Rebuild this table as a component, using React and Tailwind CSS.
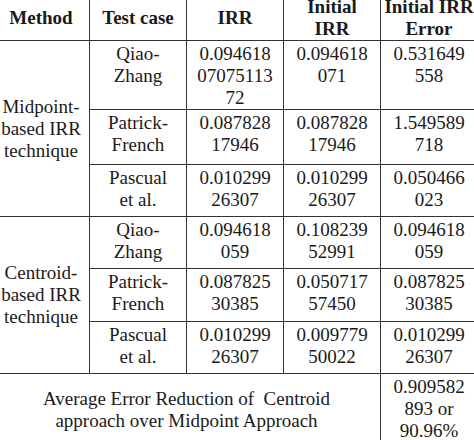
import React from "react";

const groups = [
  {
    method: ["Midpoint-", "based IRR", "technique"],
    rows: [
      { h: "h-[68px]", test: ["Qiao-", "Zhang"], irr: ["0.094618", "07075113", "72"], init: ["0.094618", "071"], err: ["0.531649", "558"] },
      { h: "h-[55px]", test: ["Patrick-", "French"], irr: ["0.087828", "17946"], init: ["0.087828", "17946"], err: ["1.549589", "718"] },
      { h: "h-[52px]", test: ["Pascual", "et al."], irr: ["0.010299", "26307"], init: ["0.010299", "26307"], err: ["0.050466", "023"] },
    ],
  },
  {
    method: ["Centroid-", "based IRR", "technique"],
    rows: [
      { h: "h-[52px]", test: ["Qiao-", "Zhang"], irr: ["0.094618", "059"], init: ["0.108239", "52991"], err: ["0.094618", "059"] },
      { h: "h-[53px]", test: ["Patrick-", "French"], irr: ["0.087825", "30385"], init: ["0.050717", "57450"], err: ["0.087825", "30385"] },
      { h: "h-[52px]", test: ["Pascual", "et al."], irr: ["0.010299", "26307"], init: ["0.009779", "50022"], err: ["0.010299", "26307"] },
    ],
  },
];

function Lines({ lines }) {
  return lines.map((l, i) => (
    <div key={i} className="whitespace-nowrap font-['Liberation_Serif',serif]">{l}</div>
  ));
}

const cell = "font-['Liberation_Serif',serif] border-[1.5px] border-[#333] text-center p-0 text-[19px] leading-[22px]";
const data = `${cell} font-normal align-top pt-[2px]`;

export default function App() {
  return (
    <div className="w-[474px] h-[440px] overflow-hidden bg-white text-[#1a1a1a] font-['Liberation_Serif',serif]">
      <table className="table-fixed border-collapse ml-[-8px] mt-[-5px] w-[485px] font-['Liberation_Serif',serif]">
        <colgroup>
          <col className="w-[97px]" />
          <col className="w-[97px]" />
          <col className="w-[97px]" />
          <col className="w-[97px]" />
          <col className="w-[97px]" />
        </colgroup>
        <thead>
          <tr className="h-[45px]">
            <th className={`${cell} font-bold align-middle`}>Method</th>
            <th className={`${cell} font-bold align-middle`}>Test case</th>
            <th className={`${cell} font-bold align-middle`}>IRR</th>
            <th className={`${cell} font-bold align-middle`}><Lines lines={["Initial", "IRR"]} /></th>
            <th className={`${cell} font-bold align-middle`}><Lines lines={["Initial IRR", "Error"]} /></th>
          </tr>
        </thead>
        <tbody>
          {groups.map((g) =>
            g.rows.map((r, i) => (
              <tr key={g.method[0] + i} className={r.h}>
                {i === 0 && (
                  <td rowSpan={3} className={`${cell} font-normal align-middle`}>
                    <Lines lines={g.method} />
                  </td>
                )}
                <td className={data}><Lines lines={r.test} /></td>
                <td className={data}><Lines lines={r.irr} /></td>
                <td className={data}><Lines lines={r.init} /></td>
                <td className={data}><Lines lines={r.err} /></td>
              </tr>
            ))
          )}
          <tr className="h-[72px]">
            <td colSpan={4} className={`${cell} font-normal align-middle`}>
              <div className="whitespace-pre">Average Error Reduction of  Centroid</div>
              <div>approach over Midpoint Approach</div>
            </td>
            <td className={data}><Lines lines={["0.909582", "893 or", "90.96%"]} /></td>
          </tr>
        </tbody>
      </table>
    </div>
  );
}
